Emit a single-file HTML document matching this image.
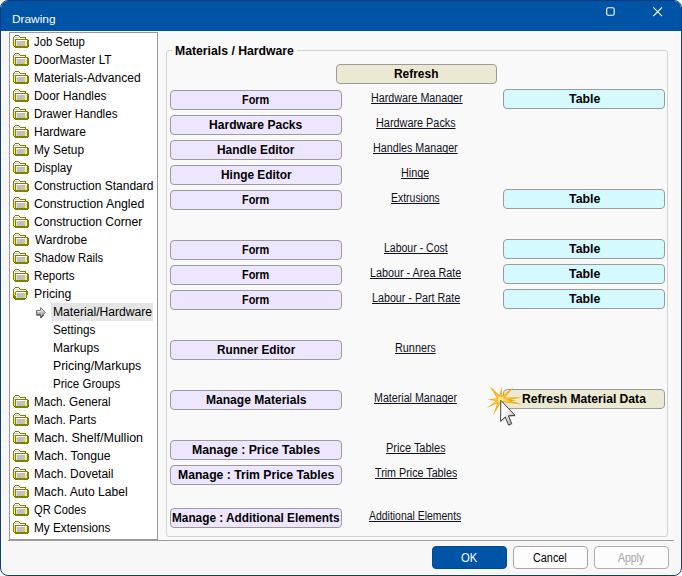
<!DOCTYPE html><html><head><meta charset="utf-8"><title>Drawing</title><style>
html,body{margin:0;padding:0}
body{width:682px;height:576px;background:#fff;overflow:hidden;position:relative;font-family:"Liberation Sans",sans-serif;font-size:12px;color:#000}
.abs,.t,.b{position:absolute}
.win{left:0;top:0;width:680px;height:574px;border:1px solid #0b3b7c;border-radius:8px;background:#f7f7f7;overflow:hidden;box-shadow:inset 0 0 0 1px #fff}
.titlebar{left:0;top:0;width:682px;height:30px;background:#0054a6}
.t{white-space:nowrap;line-height:14px;font-size:12px;transform-origin:0 0;display:block}
.bold{font-weight:700}
.link{text-decoration:underline;text-decoration-skip-ink:none;overflow:hidden;height:13px;color:#10101c}
.b{box-sizing:border-box;height:20px;border:1px solid #9b9b9b;border-radius:4px}
.lav{background:#eee6ff;left:170px;width:172px}
.cyan{background:#d4f9ff;left:503px;width:162px}
.beige{background:#ece9d2}
.tree{left:9px;top:32px;width:149px;height:508px;box-sizing:border-box;border:1px solid #989898;background:#fff}
.sel{left:51px;top:303px;width:102px;height:18px;background:#e5e5e5}
.grp{left:166px;top:50px;width:502px;height:487px;box-sizing:border-box;border:1px solid #d3d3d3;border-radius:3px}
.legbg{left:172px;top:44px;width:125px;height:14px;background:#f9f9f9}
.sep{left:8px;top:540px;width:666px;height:1px;background:#9d9d9d}
.dlg{box-sizing:border-box;top:546px;height:23px;width:75px;border-radius:4px}
.ico{position:absolute;width:16px;height:13px;shape-rendering:crispEdges}
</style></head><body>
<svg width="0" height="0" style="position:absolute"><defs>
<g id="fc"><rect x="2" y="0" width="4" height="1" fill="#808000"/><rect x="1" y="1" width="1" height="1" fill="#808000"/><rect x="6" y="1" width="1" height="1" fill="#808000"/><rect x="2" y="1" width="4" height="1" fill="#ffffff"/><rect x="0" y="2" width="1" height="9" fill="#808000"/><rect x="1" y="2" width="6" height="1" fill="#e4e4f0"/><rect x="2" y="2" width="4" height="1" fill="#cdcdd4"/><rect x="7" y="2" width="6" height="1" fill="#808000"/><rect x="1" y="3" width="11" height="1" fill="#ffffff"/><rect x="12" y="3" width="1" height="1" fill="#808000"/><rect x="1" y="4" width="1" height="7" fill="#e4e4f0"/><rect x="1" y="7" width="1" height="4" fill="#ffff00"/><rect x="2" y="4" width="13" height="1" fill="#808000"/><rect x="2" y="5" width="1" height="6" fill="#808000"/><rect x="3" y="5" width="11" height="1" fill="#ffffff"/><rect x="3" y="6" width="1" height="5" fill="#e4e4f0"/><rect x="4" y="6" width="8" height="5" fill="#c0c0c0"/><rect x="12" y="6" width="1" height="5" fill="#ffff00"/><rect x="12" y="5" width="1" height="1" fill="#ffffff"/><rect x="13" y="6" width="1" height="5" fill="#e4e4f0"/><rect x="14" y="5" width="2" height="6" fill="#808000"/><rect x="1" y="11" width="15" height="1" fill="#808000"/><rect x="2" y="12" width="13" height="1" fill="#808000"/></g>
<g id="fo"><rect x="2" y="0" width="4" height="1" fill="#808000"/><rect x="1" y="1" width="1" height="1" fill="#808000"/><rect x="6" y="1" width="1" height="1" fill="#808000"/><rect x="2" y="1" width="4" height="1" fill="#ffffff"/><rect x="0" y="2" width="1" height="9" fill="#808000"/><rect x="1" y="2" width="6" height="1" fill="#e4e4f0"/><rect x="7" y="2" width="6" height="1" fill="#808000"/><rect x="1" y="3" width="12" height="1" fill="#ffffff"/><rect x="13" y="3" width="1" height="1" fill="#808000"/><rect x="14" y="4" width="1" height="4" fill="#808000"/><rect x="1" y="4" width="1" height="7" fill="#e4e4f0"/><rect x="2" y="4" width="12" height="1" fill="#808000"/><rect x="2" y="4" width="1" height="1" fill="#ffff00"/><rect x="1" y="7" width="1" height="1" fill="#ffff00"/><rect x="2" y="8" width="1" height="1" fill="#ffff00"/><rect x="2" y="5" width="1" height="3" fill="#808000"/><rect x="1" y="8" width="1" height="3" fill="#808000"/><rect x="2" y="9" width="1" height="2" fill="#808000"/><rect x="3" y="5" width="10" height="1" fill="#ffffff"/><rect x="3" y="6" width="9" height="5" fill="#c0c0c0"/><rect x="3" y="6" width="1" height="5" fill="#e4e4f0"/><rect x="12" y="6" width="1" height="4" fill="#ffff00"/><rect x="12" y="10" width="1" height="1" fill="#e4e4f0"/><rect x="13" y="5" width="1" height="6" fill="#808000"/><rect x="1" y="11" width="12" height="1" fill="#808000"/><rect x="2" y="12" width="10" height="1" fill="#808000"/></g>
</defs></svg>
<div class="abs win">
<div class="abs titlebar"></div><div class="abs" style="left:0;top:30px;width:682px;height:1px;background:#fff"></div>
</div>
<svg class="abs" style="left:600px;top:2px" width="70" height="22" viewBox="0 0 70 22"><rect x="6.7" y="5.7" width="7.5" height="7.5" rx="1.5" fill="none" stroke="#fff" stroke-width="1.1"/><path d="M53.3 5.4 L62 14.1 M62 5.4 L53.3 14.1" stroke="#fff" stroke-width="1.05" fill="none"/></svg>
<div class="abs" style="left:158px;top:32px;width:516px;height:508px;background:#f9f9f9"></div>
<div class="abs tree"></div><div class="abs sel"></div>
<div class="abs grp"></div><div class="abs legbg"></div><div class="abs sep"></div>
<svg class="ico" style="left:13px;top:35px" viewBox="0 0 16 13"><use href="#fc"/></svg>
<svg class="ico" style="left:13px;top:53px" viewBox="0 0 16 13"><use href="#fc"/></svg>
<svg class="ico" style="left:13px;top:71px" viewBox="0 0 16 13"><use href="#fc"/></svg>
<svg class="ico" style="left:13px;top:89px" viewBox="0 0 16 13"><use href="#fc"/></svg>
<svg class="ico" style="left:13px;top:107px" viewBox="0 0 16 13"><use href="#fc"/></svg>
<svg class="ico" style="left:13px;top:125px" viewBox="0 0 16 13"><use href="#fc"/></svg>
<svg class="ico" style="left:13px;top:143px" viewBox="0 0 16 13"><use href="#fc"/></svg>
<svg class="ico" style="left:13px;top:161px" viewBox="0 0 16 13"><use href="#fc"/></svg>
<svg class="ico" style="left:13px;top:179px" viewBox="0 0 16 13"><use href="#fc"/></svg>
<svg class="ico" style="left:13px;top:197px" viewBox="0 0 16 13"><use href="#fc"/></svg>
<svg class="ico" style="left:13px;top:215px" viewBox="0 0 16 13"><use href="#fc"/></svg>
<svg class="ico" style="left:13px;top:233px" viewBox="0 0 16 13"><use href="#fc"/></svg>
<svg class="ico" style="left:13px;top:251px" viewBox="0 0 16 13"><use href="#fc"/></svg>
<svg class="ico" style="left:13px;top:269px" viewBox="0 0 16 13"><use href="#fc"/></svg>
<svg class="ico" style="left:13px;top:287px" viewBox="0 0 16 13"><use href="#fo"/></svg>
<svg class="ico" style="left:13px;top:395px" viewBox="0 0 16 13"><use href="#fc"/></svg>
<svg class="ico" style="left:13px;top:413px" viewBox="0 0 16 13"><use href="#fc"/></svg>
<svg class="ico" style="left:13px;top:431px" viewBox="0 0 16 13"><use href="#fc"/></svg>
<svg class="ico" style="left:13px;top:449px" viewBox="0 0 16 13"><use href="#fc"/></svg>
<svg class="ico" style="left:13px;top:467px" viewBox="0 0 16 13"><use href="#fc"/></svg>
<svg class="ico" style="left:13px;top:485px" viewBox="0 0 16 13"><use href="#fc"/></svg>
<svg class="ico" style="left:13px;top:503px" viewBox="0 0 16 13"><use href="#fc"/></svg>
<svg class="ico" style="left:13px;top:521px" viewBox="0 0 16 13"><use href="#fc"/></svg>
<svg class="abs" style="left:35px;top:306px" width="12" height="13" viewBox="0 0 12 13"><path d="M1.5 4.5 H5.5 V1.6 L10.4 6.5 L5.5 11.4 V8.5 H1.5 Z" fill="#b9b9b9" stroke="#767676" stroke-width="1"/><path d="M2 5.5 H6.3 V3.6 L8.8 6" fill="none" stroke="#e6e6e6" stroke-width="1"/><path d="M1.2 9 H5.4 M5.6 11.9 L8.6 8.9" fill="none" stroke="#2b2b2b" stroke-width="1.1"/></svg>
<div class="b lav" style="top:90px"></div>
<div class="b lav" style="top:115px"></div>
<div class="b lav" style="top:140px"></div>
<div class="b lav" style="top:165px"></div>
<div class="b lav" style="top:190px"></div>
<div class="b lav" style="top:240px"></div>
<div class="b lav" style="top:265px"></div>
<div class="b lav" style="top:290px"></div>
<div class="b lav" style="top:340px"></div>
<div class="b lav" style="top:390px"></div>
<div class="b lav" style="top:440px"></div>
<div class="b lav" style="top:465px"></div>
<div class="b lav" style="top:508px"></div>
<div class="b beige" style="left:336px;width:161px;top:64px"></div>
<div class="b cyan" style="top:89px"></div>
<div class="b cyan" style="top:189px"></div>
<div class="b cyan" style="top:239px"></div>
<div class="b cyan" style="top:264px"></div>
<div class="b cyan" style="top:289px"></div>
<div class="b beige" style="left:503px;width:162px;top:389px"></div>
<div class="abs dlg" style="left:432px;background:#0054a6;border:1px solid #004a94"></div>
<div class="abs dlg" style="left:513px;background:#fdfdfd;border:1px solid #a6a6a6"></div>
<div class="abs dlg" style="left:594px;background:#fcfcfc;border:1px solid #adadad"></div>
<span class="t" style="left:33.90px;top:35.00px;transform:scaleX(0.9410);color:#000">Job Setup</span>
<span class="t" style="left:33.86px;top:53.00px;transform:scaleX(0.9792);color:#000">DoorMaster LT</span>
<span class="t" style="left:33.80px;top:71.00px;transform:scaleX(1.0057);color:#000">Materials-Advanced</span>
<span class="t" style="left:33.82px;top:89.00px;transform:scaleX(0.9875);color:#000">Door Handles</span>
<span class="t" style="left:33.86px;top:107.00px;transform:scaleX(0.9707);color:#000">Drawer Handles</span>
<span class="t" style="left:33.82px;top:125.00px;transform:scaleX(0.9968);color:#000">Hardware</span>
<span class="t" style="left:33.84px;top:143.00px;transform:scaleX(0.9863);color:#000">My Setup</span>
<span class="t" style="left:33.86px;top:161.00px;transform:scaleX(0.9693);color:#000">Display</span>
<span class="t" style="left:34.20px;top:179.00px;transform:scaleX(1.0006);color:#000">Construction Standard</span>
<span class="t" style="left:34.22px;top:197.00px;transform:scaleX(1.0269);color:#000">Construction Angled</span>
<span class="t" style="left:34.22px;top:215.00px;transform:scaleX(1.0083);color:#000">Construction Corner</span>
<span class="t" style="left:34.50px;top:233.00px;transform:scaleX(0.9987);color:#000">Wardrobe</span>
<span class="t" style="left:34.03px;top:251.00px;transform:scaleX(0.9430);color:#000">Shadow Rails</span>
<span class="t" style="left:33.86px;top:269.00px;transform:scaleX(0.9672);color:#000">Reports</span>
<span class="t" style="left:33.79px;top:287.00px;transform:scaleX(1.0198);color:#000">Pricing</span>
<span class="t" style="left:52.80px;top:305.00px;transform:scaleX(1.0111);color:#000">Material/Hardware</span>
<span class="t" style="left:52.50px;top:323.00px;transform:scaleX(0.9744);color:#000">Settings</span>
<span class="t" style="left:52.50px;top:341.00px;transform:scaleX(1.0051);color:#000">Markups</span>
<span class="t" style="left:52.50px;top:359.00px;transform:scaleX(1.0258);color:#000">Pricing/Markups</span>
<span class="t" style="left:52.50px;top:377.00px;transform:scaleX(0.9604);color:#000">Price Groups</span>
<span class="t" style="left:33.84px;top:395.00px;transform:scaleX(0.9743);color:#000">Mach. General</span>
<span class="t" style="left:33.86px;top:413.00px;transform:scaleX(0.9734);color:#000">Mach. Parts</span>
<span class="t" style="left:33.50px;top:431.00px;transform:scaleX(1.0415);color:#000">Mach. Shelf/Mullion</span>
<span class="t" style="left:33.79px;top:449.00px;transform:scaleX(1.0199);color:#000">Mach. Tongue</span>
<span class="t" style="left:33.80px;top:467.00px;transform:scaleX(1.0012);color:#000">Mach. Dovetail</span>
<span class="t" style="left:33.80px;top:485.00px;transform:scaleX(1.0104);color:#000">Mach. Auto Label</span>
<span class="t" style="left:34.36px;top:503.00px;transform:scaleX(0.9275);color:#000">QR Codes</span>
<span class="t" style="left:33.82px;top:521.00px;transform:scaleX(0.9803);color:#000">My Extensions</span>
<span class="t bold" style="left:241.97px;top:93.00px;transform:scaleX(0.9089)">Form</span>
<span class="t bold" style="left:208.66px;top:118.00px;transform:scaleX(1.0061)">Hardware Packs</span>
<span class="t bold" style="left:216.85px;top:143.00px;transform:scaleX(0.9922)">Handle Editor</span>
<span class="t bold" style="left:221.05px;top:168.00px;transform:scaleX(0.9913)">Hinge Editor</span>
<span class="t bold" style="left:241.97px;top:193.00px;transform:scaleX(0.9089)">Form</span>
<span class="t bold" style="left:241.97px;top:243.00px;transform:scaleX(0.9089)">Form</span>
<span class="t bold" style="left:241.97px;top:268.00px;transform:scaleX(0.9089)">Form</span>
<span class="t bold" style="left:241.97px;top:293.00px;transform:scaleX(0.9089)">Form</span>
<span class="t bold" style="left:216.85px;top:343.00px;transform:scaleX(0.9798)">Runner Editor</span>
<span class="t bold" style="left:205.76px;top:393.00px;transform:scaleX(1.0043)">Manage Materials</span>
<span class="t bold" style="left:191.85px;top:443.00px;transform:scaleX(1.0235)">Manage : Price Tables</span>
<span class="t bold" style="left:178.43px;top:468.00px;transform:scaleX(1.0153)">Manage : Trim Price Tables</span>
<span class="t bold" style="left:171.80px;top:511.00px;transform:scaleX(0.9841)">Manage : Additional Elements</span>
<span class="t bold" style="left:393.84px;top:67.00px;transform:scaleX(0.9943)">Refresh</span>
<span class="t bold" style="left:569.20px;top:92.00px;transform:scaleX(1.0296)">Table</span>
<span class="t bold" style="left:569.20px;top:192.00px;transform:scaleX(1.0296)">Table</span>
<span class="t bold" style="left:569.20px;top:242.00px;transform:scaleX(1.0296)">Table</span>
<span class="t bold" style="left:569.20px;top:267.00px;transform:scaleX(1.0296)">Table</span>
<span class="t bold" style="left:569.20px;top:292.00px;transform:scaleX(1.0296)">Table</span>
<span class="t bold" style="left:521.80px;top:392.00px;transform:scaleX(1.0094)">Refresh Material Data</span>
<span class="t link" style="left:370.50px;top:91.00px;transform:scaleX(0.8921)">Hardware Manager</span>
<span class="t link" style="left:376.32px;top:116.00px;transform:scaleX(0.9055)">Hardware Packs</span>
<span class="t link" style="left:373.30px;top:141.00px;transform:scaleX(0.8941)">Handles Manager</span>
<span class="t link" style="left:401.39px;top:166.00px;transform:scaleX(0.9030)">Hinge</span>
<span class="t link" style="left:391.44px;top:191.00px;transform:scaleX(0.8710)">Extrusions</span>
<span class="t link" style="left:384.42px;top:241.00px;transform:scaleX(0.8756)">Labour - Cost</span>
<span class="t link" style="left:370.37px;top:266.00px;transform:scaleX(0.8998)">Labour - Area Rate</span>
<span class="t link" style="left:371.87px;top:291.00px;transform:scaleX(0.8928)">Labour - Part Rate</span>
<span class="t link" style="left:395.37px;top:341.00px;transform:scaleX(0.9040)">Runners</span>
<span class="t link" style="left:374.29px;top:391.00px;transform:scaleX(0.8901)">Material Manager</span>
<span class="t link" style="left:386.37px;top:441.00px;transform:scaleX(0.9153)">Price Tables</span>
<span class="t link" style="left:375.00px;top:466.00px;transform:scaleX(0.8942)">Trim Price Tables</span>
<span class="t link" style="left:369.36px;top:509.00px;transform:scaleX(0.8700)">Additional Elements</span>
<span class="t bold" style="left:175.17px;top:44.00px;transform:scaleX(1.0186)">Materials / Hardware</span>
<span class="t" style="left:460.76px;top:551.00px;transform:scaleX(0.9368);color:#fff">OK</span>
<span class="t" style="left:533.03px;top:551.00px;transform:scaleX(0.9041);color:#000">Cancel</span>
<span class="t" style="left:618.03px;top:551.00px;transform:scaleX(0.8710);color:#a3a3a3">Apply</span>
<span class="t" style="left:12.00px;top:12.00px;transform:scaleX(1.0780);color:#fff;font-size:11px">Drawing</span>
<svg class="abs" style="left:484px;top:382px" width="42" height="46" viewBox="0 0 42 46">
<defs><linearGradient id="cg" x1="0" y1="0" x2="1" y2="1"><stop offset="0" stop-color="#ffffff"/><stop offset=".4" stop-color="#fafafa"/><stop offset="1" stop-color="#a8a8a8"/></linearGradient></defs>
<path d="M18.4 16.1 L5.2 3.8 L14.8 19.1 Z M18.7 17.8 L17.6 5.0 L14.5 17.4 Z M18.0 19.1 L29.8 5.0 L15.2 16.1 Z M16.8 19.6 L38.5 15.2 L16.4 15.6 Z M16.1 19.5 L39.0 22.8 L17.1 15.7 Z M16.6 15.6 L3.5 17.7 L16.6 19.6 Z M15.6 15.9 L2.8 26.0 L17.6 19.3 Z M14.8 16.7 L9.0 33.6 L18.4 18.5 Z M16.5 19.1 L33.0 18.9 L16.7 16.1 Z M17.8 16.7 L10.5 9.0 L15.4 18.5 Z M17.6 18.6 L24.5 10.0 L15.6 16.6 Z M15.8 16.4 L9.5 22.3 L17.4 18.8 Z" fill="#efa90c"/>
<path d="M17.4 16.9 L9.8 9.3 L15.8 18.3 Z M17.5 17.7 L17.2 10.0 L15.7 17.5 Z M17.3 18.3 L24.5 10.0 L15.9 16.9 Z M16.7 18.5 L29.7 16.2 L16.5 16.7 Z M16.4 18.5 L30.0 20.7 L16.8 16.7 Z M16.6 16.7 L8.7 17.7 L16.6 18.5 Z M16.1 16.8 L8.3 22.6 L17.1 18.4 Z M15.8 17.2 L12.0 27.2 L17.4 18.0 Z M16.5 18.3 L26.4 18.4 L16.7 16.9 Z M17.2 17.2 L12.9 12.4 L16.0 18.0 Z M17.0 18.1 L21.3 13.0 L16.2 17.1 Z M16.3 17.1 L12.3 20.4 L16.9 18.1 Z" fill="#ffd95a"/>
<circle cx="16.6" cy="17.6" r="2.8" fill="#ffe88a"/>
<path d="M17.4 19.6 L17.3 40.4 L22 36.2 L25.2 44 L28.6 42.6 L25.4 35 L32 34.4 Z" fill="#000" opacity=".18"/>
<path d="M16.8 18.3 L16.6 39.2 L21.3 35 L24.4 43 L27.6 41.6 L24.4 33.8 L31 33.3 Z" fill="url(#cg)" stroke="#2e2e2e" stroke-width=".9" stroke-linejoin="round"/>
</svg>
</body></html>
